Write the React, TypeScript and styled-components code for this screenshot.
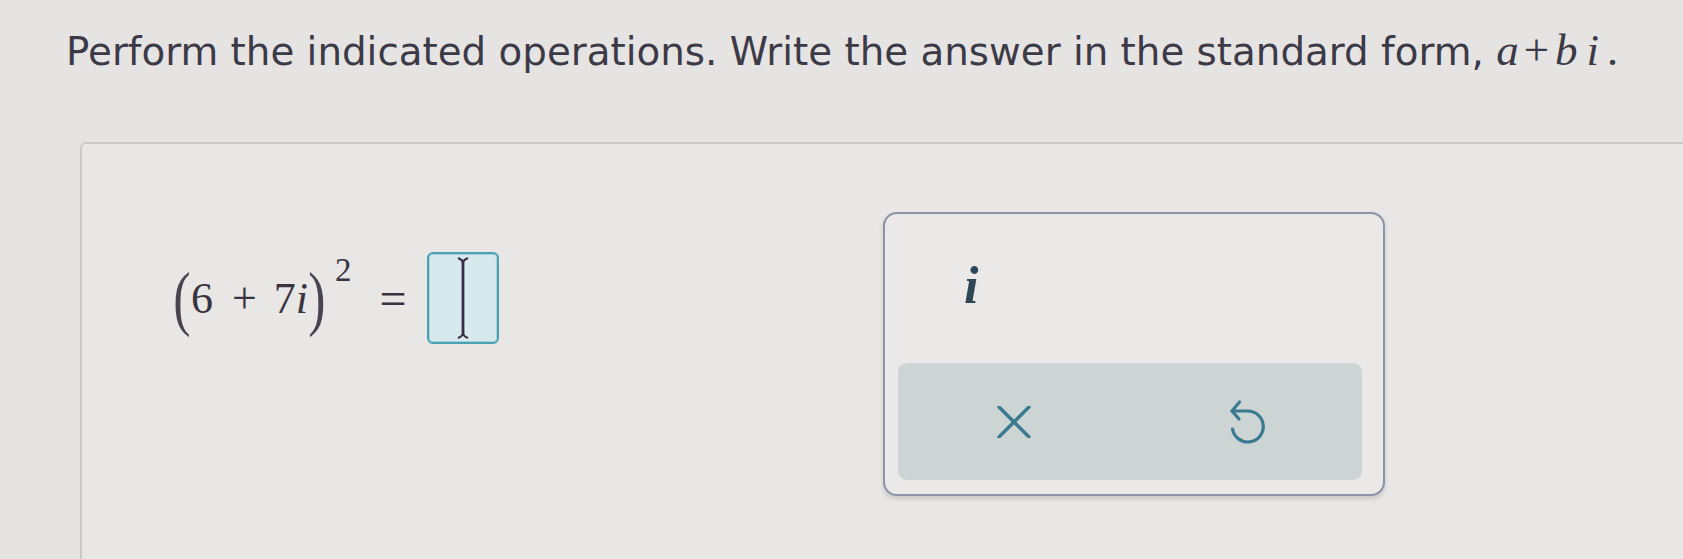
import styled, { createGlobalStyle } from "styled-components";

const GlobalStyle = createGlobalStyle`
  html, body {
    margin: 0;
    padding: 0;
    background: #e5e4e2;
  }
  body {
    font-family: "DejaVu Sans", Verdana, sans-serif;
    color: #3d3a48;
  }
`;

const Page = styled.div`
  width: 1683px;
  height: 559px;
  overflow: hidden;
  padding-top: 25px;
  box-sizing: border-box;
`;

const Prompt = styled.h1`
  margin: 0 0 0 66px;
  font-size: 38.8px;
  font-weight: normal;
  line-height: 50px;
  white-space: nowrap;
`;

const MathVar = styled.span<{ $spacing: number }>`
  font-family: "Liberation Serif", "Times New Roman", serif;
  font-style: italic;
  font-size: 45px;
  letter-spacing: ${(p) => p.$spacing}px;
`;

const MathOp = styled.span`
  font-family: "Liberation Serif", "Times New Roman", serif;
  font-style: normal;
  font-size: 45px;
  margin: 0 6px 0 2px;
`;

const Panel = styled.section`
  margin: 65px 0 0 80px;
  height: 420px;
  border: 2px solid #c9c9c8;
  border-right: none;
  border-radius: 6px 0 0 6px;
  background: #e8e7e5;
  display: grid;
  grid-template-columns: 710px 502px;
  align-items: start;
  padding: 0 0 0 91px;
`;

const Formula = styled.div`
  display: flex;
  align-items: center;
  margin-top: 106px;
  font-family: "Liberation Serif", "Times New Roman", serif;
  font-size: 44px;
  color: #3a3440;
  height: 96px;
`;

const Paren = styled.span`
  font-size: 72px;
  color: #4a4450;
  line-height: 1;
  display: inline-block;
  transform: scaleX(0.72);
  margin: 0 -3px;
`;

const Term = styled.span<{ $italic?: boolean }>`
  font-style: ${(p) => (p.$italic ? "italic" : "normal")};
`;

const Plus = styled.span`
  margin: 0 17px 0 19px;
`;

const Exponent = styled.span`
  font-size: 33px;
  align-self: flex-start;
  margin: 2px 0 0 9px;
`;

const Equals = styled.span`
  font-size: 48px;
  margin: 0 20px 0 28px;
`;

const AnswerBox = styled.div`
  width: 68px;
  height: 88px;
  border: 2.5px solid #4aa1b3;
  box-shadow: inset 0 0 0 1px #a9d3dc;
  border-radius: 6px;
  background: #d6eaed;
  display: flex;
  justify-content: center;
  align-items: center;
`;

const Keypad = styled.div`
  margin-top: 68px;
  width: 502px;
  height: 284px;
  border: 2px solid #8c95a7;
  border-radius: 14px;
  box-shadow: 0 3px 4px rgba(60, 60, 70, 0.18);
  background: #eae9e7;
  display: flex;
  flex-direction: column;
  padding: 0 21px 14px 13px;
  box-sizing: border-box;
`;

const KeyRow = styled.div`
  flex: 1;
  display: flex;
  align-items: center;
  padding-left: 66px;
`;

const SymbolKey = styled.span`
  font-family: "Liberation Serif", "Times New Roman", serif;
  font-style: italic;
  font-weight: bold;
  font-size: 52px;
  color: #2f4756;
  margin-top: -6px;
`;

const ActionBar = styled.div`
  height: 117px;
  border-radius: 9px;
  background: #cdd4d4;
  display: grid;
  grid-template-columns: 1fr 1fr;
  align-items: center;
  justify-items: center;
`;

const ActionButton = styled.button`
  background: none;
  border: none;
  padding: 0;
  display: flex;
  color: #3a7a91;
`;

function Cursor() {
  return (
    <svg width="16" height="84" viewBox="0 0 16 84">
      <path d="M3 2 Q8 4 8 7 Q8 4 13 2" fill="none" stroke="#3b2b45" strokeWidth="2" />
      <line x1="8" y1="6" x2="8" y2="78" stroke="#3b2b45" strokeWidth="2.8" />
      <path d="M3 82 Q8 80 8 77 Q8 80 13 82" fill="none" stroke="#3b2b45" strokeWidth="2" />
    </svg>
  );
}

function ClearIcon() {
  return (
    <svg width="34" height="32" viewBox="0 0 34 32">
      <path d="M2 1 L32 31 M32 1 L2 31" stroke="currentColor" strokeWidth="3.4" strokeLinecap="round" />
    </svg>
  );
}

function UndoIcon() {
  return (
    <svg width="48" height="54" viewBox="0 0 48 54">
      <path
        d="M10 16 H25.5 A15.5 15.5 0 1 1 10.5 34"
        fill="none"
        stroke="currentColor"
        strokeWidth="3.2"
        strokeLinecap="round"
      />
      <path
        d="M17.5 7 L10 16 L17 24"
        fill="none"
        stroke="currentColor"
        strokeWidth="3.2"
        strokeLinecap="round"
        strokeLinejoin="round"
      />
    </svg>
  );
}

export default function App() {
  return (
    <>
      <GlobalStyle />
      <Page>
        <Prompt>
          Perform the indicated operations. Write the answer in the standard form,{" "}
          <MathVar $spacing={3}>a</MathVar>
          <MathOp>+</MathOp>
          <MathVar $spacing={9}>bi.</MathVar>
        </Prompt>
        <Panel>
          <Formula>
            <Paren>(</Paren>
            <Term>6</Term>
            <Plus>+</Plus>
            <Term>7</Term>
            <Term $italic>i</Term>
            <Paren>)</Paren>
            <Exponent>2</Exponent>
            <Equals>=</Equals>
            <AnswerBox>
              <Cursor />
            </AnswerBox>
          </Formula>
          <Keypad>
            <KeyRow>
              <SymbolKey>i</SymbolKey>
            </KeyRow>
            <ActionBar>
              <ActionButton aria-label="Clear">
                <ClearIcon />
              </ActionButton>
              <ActionButton aria-label="Undo">
                <UndoIcon />
              </ActionButton>
            </ActionBar>
          </Keypad>
        </Panel>
      </Page>
    </>
  );
}
